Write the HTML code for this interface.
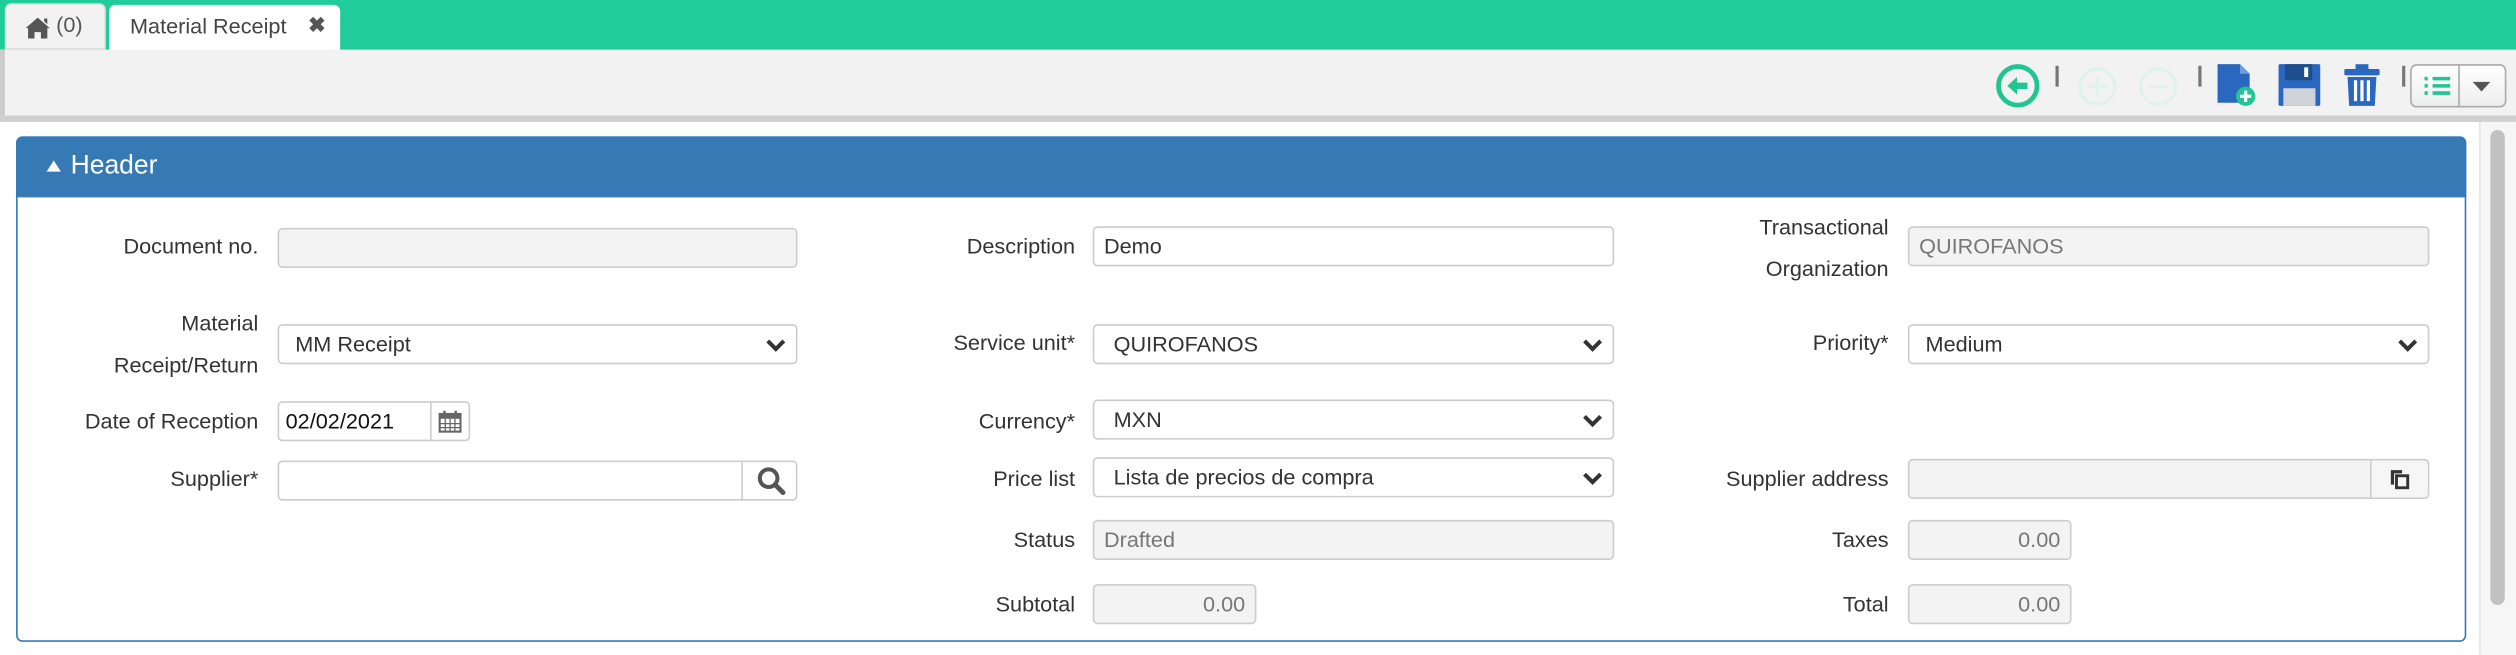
<!DOCTYPE html>
<html><head><meta charset="utf-8"><style>
*{box-sizing:border-box;margin:0;padding:0}
html,body{width:2516px;height:655px;overflow:hidden;background:#fff}
#w{position:absolute;left:0;top:0;width:1568px;height:408px;transform:scale(1.6046);transform-origin:0 0;font-family:"Liberation Sans",sans-serif;color:#333;font-size:13px}
.a{position:absolute}
.lbl{position:absolute;text-align:right;font-size:13.5px;color:#333;line-height:26px}
.in{position:absolute;height:25px;border:1px solid #ccc;border-radius:3px;background:#fff;font-size:13.5px;line-height:23px;padding-left:8px;color:#333}
.ro{background:#f3f3f3;color:#777}
.num{text-align:right;padding-right:6px}
.sel svg{position:absolute;right:6px;top:8px}
</style></head><body><div id="w">
<div class="a" style="left:0;top:0;width:1568px;height:31px;background:#21cc9b"></div>
<div class="a" style="left:3px;top:2px;width:63px;height:29px;background:#f2f2f2;border-radius:4px 4px 0 0;border:1px solid #ddd"></div>
<svg class="a" style="left:15px;top:10px" width="17" height="14" viewBox="0 0 17 14"><path d="M8.5 1 L1 7.5 L2.5 7.5 L2.5 14 L6.5 14 L6.5 10 L10.5 10 L10.5 14 L14.5 14 L14.5 7.5 L16 7.5 Z M12.5 1.5 h2 v3.5 l-2 -1.7Z" fill="#555"/></svg>
<div class="a" style="left:35px;top:8px;font-size:13.5px;color:#555">(0)</div>
<div class="a" style="left:68px;top:3px;width:144px;height:29px;background:#fff;border-radius:4px 4px 0 0"></div>
<div class="a" style="left:81px;top:9px;font-size:13.5px;color:#444">Material Receipt</div>
<div class="a" style="left:192px;top:8px;font-size:13px;color:#555;font-weight:bold">✖</div>
<div class="a" style="left:0;top:31px;width:1568px;height:41px;background:#f2f2f2;border-left:3px solid #ccc"></div>
<div class="a" style="left:0;top:72px;width:1568px;height:4px;background:#d0d0d0"></div>
<!-- toolbar icons -->
<svg class="a" style="left:1243px;top:39px" width="29" height="29" viewBox="0 0 29 29"><circle cx="14.5" cy="14.5" r="12" fill="none" stroke="#21c593" stroke-width="3"/><path d="M8 14.5 L14 9 V12.5 H20.5 V16.5 H14 V20Z" fill="#21c593"/></svg>
<div class="a" style="left:1281px;top:41px;width:2px;height:13px;background:#777"></div>
<svg class="a" style="left:1294px;top:41px" width="26" height="26"><circle cx="13" cy="13" r="11" fill="none" stroke="#dff2ec" stroke-width="2"/><path d="M13 7v12M7 13h12" stroke="#dff2ec" stroke-width="2"/></svg>
<svg class="a" style="left:1332px;top:41px" width="26" height="26"><circle cx="13" cy="13" r="11" fill="none" stroke="#dff2ec" stroke-width="2"/><path d="M7 13h12" stroke="#dff2ec" stroke-width="2"/></svg>
<div class="a" style="left:1370px;top:41px;width:2px;height:13px;background:#777"></div>
<svg class="a" style="left:1381px;top:39px" width="26" height="28"><path d="M1 1h14l6 6v18H1Z" fill="#2a68c0"/><path d="M15 1v6h6Z" fill="#6c9ee0"/><circle cx="18.5" cy="21" r="6" fill="#21c593"/><path d="M18.5 17.5v7M15 21h7" stroke="#fff" stroke-width="2"/></svg>
<svg class="a" style="left:1419px;top:39px" width="28" height="28"><rect x="1" y="1" width="26" height="26" fill="#2a68c0" rx="1"/><rect x="5" y="1" width="17" height="10" fill="#1d4f8f"/><rect x="17" y="3" width="2.5" height="6" fill="#fff"/><rect x="4" y="16" width="20" height="11" fill="#d0d3d7"/></svg>
<svg class="a" style="left:1460px;top:39px" width="24" height="28"><rect x="1" y="4" width="22" height="4" rx="1" fill="#2a68c0"/><rect x="8" y="1" width="8" height="4" fill="#2a68c0"/><path d="M3 9h18l-1 18H4Z" fill="#2a68c0"/><path d="M8 11v13M12 11v13M16 11v13" stroke="#fff" stroke-width="2"/></svg>
<div class="a" style="left:1497px;top:41px;width:2px;height:13px;background:#777"></div>
<div class="a" style="left:1502px;top:40px;width:60px;height:27px;border:1px solid #aaa;border-radius:4px;background:linear-gradient(#fff,#eee)"></div>
<div class="a" style="left:1532px;top:40px;width:1px;height:27px;background:#aaa"></div>
<svg class="a" style="left:1509px;top:46px" width="20" height="15"><path d="M2 3h2M2 7.5h2M2 12h2M7 3h11M7 7.5h11M7 12h11" stroke="#21c593" stroke-width="2.2"/></svg>
<svg class="a" style="left:1540px;top:50px" width="14" height="8"><path d="M1 1h11L6.5 7Z" fill="#555"/></svg>
<!-- scrollbar -->
<div class="a" style="left:1545px;top:76px;width:23px;height:332px;background:#f6f6f6;border-left:1px solid #e5e5e5"></div>
<div class="a" style="left:1552px;top:81px;width:9px;height:296px;background:#c1c1c1;border-radius:5px"></div>
<!-- panel -->
<div class="a" style="left:10px;top:85px;width:1527px;height:315px;border:1px solid #337ab7;border-radius:4px"></div>
<div class="a" style="left:10px;top:85px;width:1527px;height:38px;background:#367ab5;border-radius:4px 4px 0 0"></div>
<svg class="a" style="left:29px;top:100px" width="9" height="7"><path d="M0 7L4.5 0L9 7Z" fill="#fff"/></svg>
<div class="a" style="left:44px;top:94px;font-size:16.5px;color:#fff">Header</div>
<!-- col1 -->
<div class="lbl" style="left:0;width:161px;top:141px">Document no.</div>
<div class="in ro" style="left:173px;top:142px;width:324px"></div>
<div class="lbl" style="left:0;width:161px;top:189px">Material</div>
<div class="lbl" style="left:0;width:161px;top:215px">Receipt/Return</div>
<div class="in sel" style="left:173px;top:202px;width:324px;padding-left:10px">MM Receipt<svg width="13" height="9"><path d="M1.5 1.5L6.5 6.5L11.5 1.5" fill="none" stroke="#333" stroke-width="2.5"/></svg></div>
<div class="lbl" style="left:0;width:161px;top:250px">Date of Reception</div>
<div class="in" style="left:173px;top:250px;width:120px;padding-left:4px;color:#111">02/02/2021</div>
<div class="a" style="left:268px;top:251px;width:1px;height:23px;background:#ccc"></div>
<svg class="a" style="left:273px;top:255px" width="15" height="15"><rect x="1" y="3" width="13" height="11" fill="none" stroke="#666" stroke-width="1.3"/><rect x="1" y="3" width="13" height="3" fill="#666"/><path d="M1 9h13M1 11.5h13M4.5 6v8M7.5 6v8M10.5 6v8" stroke="#666" stroke-width="0.8"/><path d="M4 1v4M11 1v4" stroke="#666" stroke-width="1.5"/></svg>
<div class="lbl" style="left:0;width:161px;top:286px">Supplier*</div>
<div class="in" style="left:173px;top:287px;width:324px"></div>
<div class="a" style="left:462px;top:288px;width:1px;height:23px;background:#ccc"></div>
<svg class="a" style="left:471px;top:290px" width="19" height="19"><circle cx="8" cy="8" r="5.5" fill="none" stroke="#555" stroke-width="2.5"/><path d="M12 12L17 17" stroke="#555" stroke-width="3" stroke-linecap="round"/></svg>
<!-- col2 -->
<div class="lbl" style="left:500px;width:170px;top:141px">Description</div>
<div class="in" style="left:681px;top:141px;width:325px;padding-left:6px">Demo</div>
<div class="lbl" style="left:500px;width:170px;top:201px">Service unit*</div>
<div class="in sel" style="left:681px;top:202px;width:325px;padding-left:12px">QUIROFANOS<svg width="13" height="9"><path d="M1.5 1.5L6.5 6.5L11.5 1.5" fill="none" stroke="#333" stroke-width="2.5"/></svg></div>
<div class="lbl" style="left:500px;width:170px;top:250px">Currency*</div>
<div class="in sel" style="left:681px;top:249px;width:325px;padding-left:12px">MXN<svg width="13" height="9"><path d="M1.5 1.5L6.5 6.5L11.5 1.5" fill="none" stroke="#333" stroke-width="2.5"/></svg></div>
<div class="lbl" style="left:500px;width:170px;top:286px">Price list</div>
<div class="in sel" style="left:681px;top:285px;width:325px;padding-left:12px">Lista de precios de compra<svg width="13" height="9"><path d="M1.5 1.5L6.5 6.5L11.5 1.5" fill="none" stroke="#333" stroke-width="2.5"/></svg></div>
<div class="lbl" style="left:500px;width:170px;top:324px">Status</div>
<div class="in ro" style="left:681px;top:324px;width:325px;padding-left:6px">Drafted</div>
<div class="lbl" style="left:500px;width:170px;top:364px">Subtotal</div>
<div class="in ro num" style="left:681px;top:364px;width:102px">0.00</div>
<!-- col3 -->
<div class="lbl" style="left:1000px;width:177px;top:129px">Transactional</div>
<div class="lbl" style="left:1000px;width:177px;top:155px">Organization</div>
<div class="in ro" style="left:1189px;top:141px;width:325px;padding-left:6px">QUIROFANOS</div>
<div class="lbl" style="left:1000px;width:177px;top:201px">Priority*</div>
<div class="in sel" style="left:1189px;top:202px;width:325px;padding-left:10px">Medium<svg width="13" height="9"><path d="M1.5 1.5L6.5 6.5L11.5 1.5" fill="none" stroke="#333" stroke-width="2.5"/></svg></div>
<div class="lbl" style="left:1000px;width:177px;top:286px">Supplier address</div>
<div class="in ro" style="left:1189px;top:286px;width:325px"></div>
<div class="a" style="left:1477px;top:287px;width:36px;height:23px;background:#f6f6f6;border-left:1px solid #ccc;border-radius:0 3px 3px 0"></div>
<svg class="a" style="left:1489px;top:292px" width="13" height="13"><path d="M1 1h7v2H3v7H1Z" fill="#333"/><rect x="4.5" y="4.5" width="7" height="7.5" fill="none" stroke="#333" stroke-width="1.8"/></svg>
<div class="lbl" style="left:1000px;width:177px;top:324px">Taxes</div>
<div class="in ro num" style="left:1189px;top:324px;width:102px">0.00</div>
<div class="lbl" style="left:1000px;width:177px;top:364px">Total</div>
<div class="in ro num" style="left:1189px;top:364px;width:102px">0.00</div>
</div></body></html>
